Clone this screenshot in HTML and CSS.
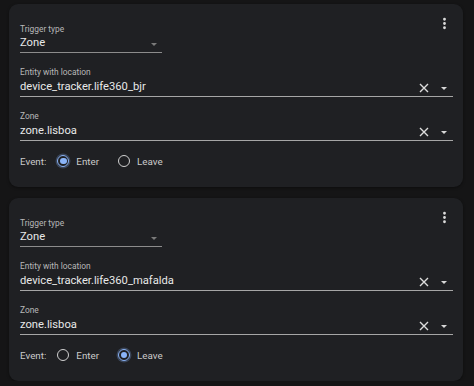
FILE: index.html
```html
<!DOCTYPE html>
<html lang="en">

<head>
  <meta charset="UTF-8" />
  <title>Zone triggers</title>
  <link rel="stylesheet" href="styles.css">
</head>

<body>
  <div class="trigger-list">

    <div class="trigger-card">
      <button class="card-menu" aria-label="Menu">
        <svg viewBox="0 0 24 24" width="17" height="17"><path fill="currentColor" d="M12,16A2,2 0 0,1 14,18A2,2 0 0,1 12,20A2,2 0 0,1 10,18A2,2 0 0,1 12,16M12,10A2,2 0 0,1 14,12A2,2 0 0,1 12,14A2,2 0 0,1 10,12A2,2 0 0,1 12,10M12,4A2,2 0 0,1 14,6A2,2 0 0,1 12,8A2,2 0 0,1 10,6A2,2 0 0,1 12,4Z"/></svg>
      </button>

      <div class="field field-select">
        <div class="field-label">Trigger type</div>
        <div class="field-value">
          <span class="value-text">Zone</span>
          <span class="arrow dim"></span>
        </div>
      </div>

      <div class="field field-combo">
        <div class="field-label">Entity with location</div>
        <div class="field-value">
          <span class="value-text">device_tracker.life360_bjr</span>
          <svg class="clear" viewBox="0 0 10 10" width="10" height="10"><path d="M1 1L9 9M9 1L1 9" stroke="currentColor" stroke-width="1.4"/></svg>
          <span class="arrow"></span>
        </div>
      </div>

      <div class="field field-combo">
        <div class="field-label">Zone</div>
        <div class="field-value">
          <span class="value-text">zone.lisboa</span>
          <svg class="clear" viewBox="0 0 10 10" width="10" height="10"><path d="M1 1L9 9M9 1L1 9" stroke="currentColor" stroke-width="1.4"/></svg>
          <span class="arrow"></span>
        </div>
      </div>

      <div class="event-row">
        <span class="event-label">Event:</span>
        <label class="radio-option"><span class="radio checked"></span>Enter</label>
        <label class="radio-option"><span class="radio"></span>Leave</label>
      </div>
    </div>

    <div class="trigger-card">
      <button class="card-menu" aria-label="Menu">
        <svg viewBox="0 0 24 24" width="17" height="17"><path fill="currentColor" d="M12,16A2,2 0 0,1 14,18A2,2 0 0,1 12,20A2,2 0 0,1 10,18A2,2 0 0,1 12,16M12,10A2,2 0 0,1 14,12A2,2 0 0,1 12,14A2,2 0 0,1 10,12A2,2 0 0,1 12,10M12,4A2,2 0 0,1 14,6A2,2 0 0,1 12,8A2,2 0 0,1 10,6A2,2 0 0,1 12,4Z"/></svg>
      </button>

      <div class="field field-select">
        <div class="field-label">Trigger type</div>
        <div class="field-value">
          <span class="value-text">Zone</span>
          <span class="arrow dim"></span>
        </div>
      </div>

      <div class="field field-combo">
        <div class="field-label">Entity with location</div>
        <div class="field-value">
          <span class="value-text">device_tracker.life360_mafalda</span>
          <svg class="clear" viewBox="0 0 10 10" width="10" height="10"><path d="M1 1L9 9M9 1L1 9" stroke="currentColor" stroke-width="1.4"/></svg>
          <span class="arrow"></span>
        </div>
      </div>

      <div class="field field-combo">
        <div class="field-label">Zone</div>
        <div class="field-value">
          <span class="value-text">zone.lisboa</span>
          <svg class="clear" viewBox="0 0 10 10" width="10" height="10"><path d="M1 1L9 9M9 1L1 9" stroke="currentColor" stroke-width="1.4"/></svg>
          <span class="arrow"></span>
        </div>
      </div>

      <div class="event-row">
        <span class="event-label">Event:</span>
        <label class="radio-option"><span class="radio"></span>Enter</label>
        <label class="radio-option"><span class="radio checked"></span>Leave</label>
      </div>
    </div>

  </div>
</body>

</html>
```

FILE: styles.css
```css
* {
  box-sizing: border-box;
}

body {
  margin: 0;
  background: #151516;
  font-family: Roboto, 'Noto Sans', sans-serif;
  color: #e1e1e1;
}

.trigger-list {
  display: flex;
  flex-direction: column;
  gap: 11px;
  padding: 4px 11px 0 9px;
}

.trigger-card {
  position: relative;
  background: #1f2023;
  border-radius: 9px;
  padding: 20px 10px 19px 11px;
  box-shadow: 0 1px 3px rgba(0, 0, 0, 0.4);
}

.card-menu {
  position: absolute;
  top: 11px;
  right: 10px;
  width: 17px;
  height: 17px;
  padding: 0;
  border: none;
  background: transparent;
  color: #dcdcdc;
  display: flex;
}

.field {
  display: flex;
  flex-direction: column;
}

.field + .field {
  margin-top: 14px;
}

.field-select {
  width: 142px;
}

.field-label {
  font-size: 8.4px;
  line-height: 10px;
  color: #b8b8b8;
}

.field-value {
  display: flex;
  align-items: center;
  margin-top: 2px;
  padding-bottom: 2px;
  height: 17px;
  border-bottom: 1px solid #8c8c8c;
  font-size: 11.2px;
  line-height: 14px;
  color: #e8e8e8;
}

.field-combo .field-value {
  height: 18px;
  border-bottom-color: #a6a6a6;
}

.value-text {
  flex: 1;
  white-space: nowrap;
}

.arrow {
  width: 0;
  height: 0;
  border-left: 3px solid transparent;
  border-right: 3px solid transparent;
  border-top: 3px solid #d8d8d8;
  margin: 3px 6px 0 0;
}

.arrow.dim {
  border-top-color: #7a7a7a;
  margin-right: 5px;
}

.clear {
  color: #dcdcdc;
  margin: 3px 12px 0 0;
}

.event-row {
  display: flex;
  align-items: center;
  margin-top: 13px;
  height: 14px;
  font-size: 9.8px;
  color: #cacaca;
}

.event-label {
  margin-right: 11px;
}

.radio-option {
  display: flex;
  align-items: center;
  gap: 7px;
  margin-right: 19px;
}

.radio {
  width: 12px;
  height: 12px;
  border-radius: 50%;
  border: 1.6px solid #d0d0d0;
  position: relative;
}

.radio.checked {
  border-color: #8ab4f8;
  box-shadow: 0 0 0 1.5px rgba(138, 180, 248, 0.25);
}

.radio.checked::after {
  content: '';
  position: absolute;
  inset: 1.6px;
  border-radius: 50%;
  background: #8ab4f8;
}
```
